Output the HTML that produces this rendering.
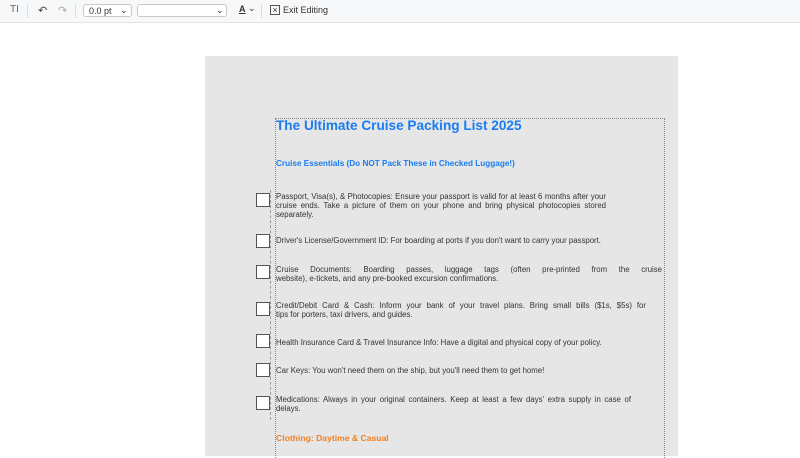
<!DOCTYPE html>
<html><head><style>
body{margin:0;width:800px;height:452px;overflow:hidden;background:#fff;font-family:"Liberation Sans",sans-serif;position:relative}
.tb{position:absolute;left:0;top:0;width:800px;height:22px;background:#f7f8f9;border-bottom:1px solid #e3e3e3;font-size:9px;color:#333}
.tb *{position:absolute}
.sep{top:4px;width:1px;height:14px;background:#ddd}
.sel{top:4px;height:13px;border:1px solid #c8c8c8;border-radius:3px;background:#fff;box-sizing:border-box}
.page{position:absolute;left:205px;top:56px;width:473px;height:400px;background:#e6e6e6}
.box{position:absolute;left:275px;top:118px;width:390px;height:340px;border:1px dotted #888;border-bottom:none;box-sizing:border-box}
.vl{position:absolute;left:270px;top:190px;width:0;height:230px;border-left:1px dashed #99a}
.t{position:absolute;left:276px;font-size:7.8px;line-height:9.2px;color:#333;width:386px}
.t div{text-align:justify;text-align-last:justify;white-space:nowrap}
.t div:last-child{text-align-last:left}
.cb{position:absolute;left:256px;width:14px;height:14px;background:#fff;border:1px solid #555;box-sizing:border-box}
</style></head><body>
<div class="tb">
<span style="left:10px;top:4px;font-size:10px;color:#666">TI</span>
<div class="sep" style="left:27px"></div>
<span style="left:38px;top:4px;font-size:11px;color:#444">↶</span>
<span style="left:58px;top:4px;font-size:11px;color:#aaa">↷</span>
<div class="sep" style="left:75px"></div>
<div class="sel" style="left:83px;width:49px"><span style="left:5px;top:1px">0.0 pt</span><span style="left:36px;top:0px">⌄</span></div>
<div class="sel" style="left:137px;width:90px"><span style="left:78px;top:0px">⌄</span></div>
<span style="left:239px;top:4px;font-weight:bold;text-decoration:underline">A</span><span style="left:248px;top:3px">⌄</span>
<div class="sep" style="left:261px"></div>
<span style="left:270px;top:5px;width:10px;height:10px;border:1px solid #555;box-sizing:border-box;font-size:9px;line-height:8px;text-align:center">×</span>
<span style="left:283px;top:5px">Exit Editing</span>
</div>
<div class="page"></div>
<div class="box"></div>
<div class="vl"></div>
<div class="t" style="top:117px;font-size:13.6px;line-height:18px;font-weight:bold;color:#1a7cf0">The Ultimate Cruise Packing List 2025</div>
<div class="t" style="top:159px;font-size:8.2px;font-weight:bold;color:#1a7cf0">Cruise Essentials (Do NOT Pack These in Checked Luggage!)</div>
<div class="cb" style="top:193px"></div>
<div class="t" style="top:192px;width:330px"><div>Passport, Visa(s), &amp; Photocopies: Ensure your passport is valid for at least 6 months after your</div><div>cruise ends. Take a picture of them on your phone and bring physical photocopies stored</div><div>separately.</div></div>
<div class="cb" style="top:234px"></div>
<div class="t" style="top:236px"><div>Driver's License/Government ID: For boarding at ports if you don't want to carry your passport.</div></div>
<div class="cb" style="top:265px"></div>
<div class="t" style="top:265px"><div>Cruise Documents: Boarding passes, luggage tags (often pre-printed from the cruise</div><div>website), e-tickets, and any pre-booked excursion confirmations.</div></div>
<div class="cb" style="top:302px"></div>
<div class="t" style="top:301px;width:370px"><div>Credit/Debit Card &amp; Cash: Inform your bank of your travel plans. Bring small bills ($1s, $5s) for</div><div>tips for porters, taxi drivers, and guides.</div></div>
<div class="cb" style="top:334px"></div>
<div class="t" style="top:338px"><div>Health Insurance Card &amp; Travel Insurance Info: Have a digital and physical copy of your policy.</div></div>
<div class="cb" style="top:363px"></div>
<div class="t" style="top:366px"><div>Car Keys: You won't need them on the ship, but you'll need them to get home!</div></div>
<div class="cb" style="top:396px"></div>
<div class="t" style="top:395px;width:355px"><div>Medications: Always in your original containers. Keep at least a few days' extra supply in case of</div><div>delays.</div></div>
<div class="t" style="top:434px;font-size:8.6px;font-weight:bold;color:#f08020">Clothing: Daytime &amp; Casual</div>
</body></html>
